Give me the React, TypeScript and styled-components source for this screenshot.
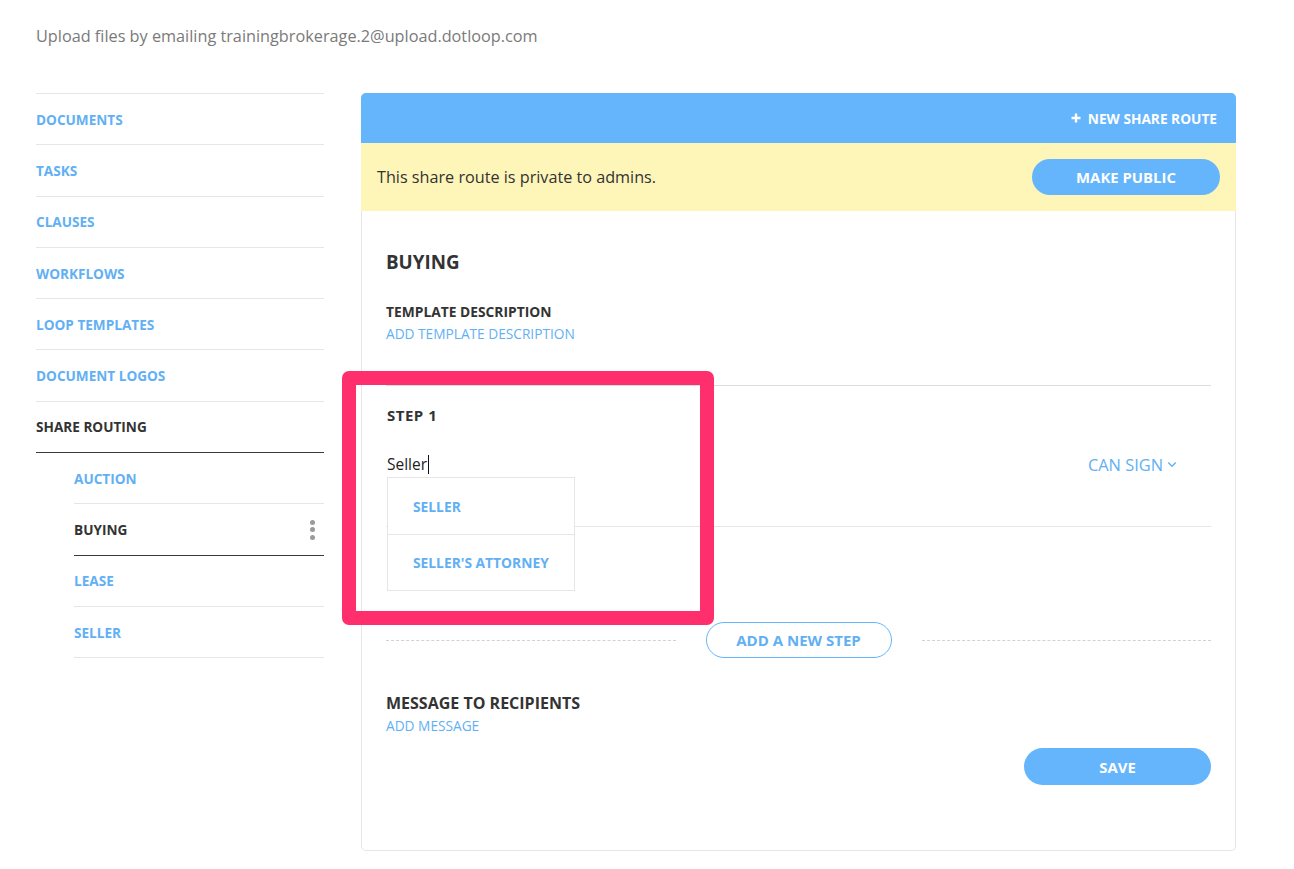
import * as React from "react";
import styled, { createGlobalStyle } from "styled-components";

const BLUE = "#64b5fc";
const LINK = "#62b0f4";
const DARK = "#333333";
const RULE = "#e6e6e6";

const GlobalStyle = createGlobalStyle`
    html, body {
        margin: 0;
        padding: 0;
        background: #ffffff;
        font-family: "Open Sans", "Liberation Sans", sans-serif;
    }
    * {
        box-sizing: border-box;
    }
`;

const navItems = [
    { label: "DOCUMENTS" },
    { label: "TASKS" },
    { label: "CLAUSES" },
    { label: "WORKFLOWS" },
    { label: "LOOP TEMPLATES" },
    { label: "DOCUMENT LOGOS" },
    { label: "SHARE ROUTING", active: true },
];

const routes = [
    { label: "AUCTION" },
    { label: "BUYING", active: true },
    { label: "LEASE" },
    { label: "SELLER" },
];

const suggestions = ["SELLER", "SELLER'S ATTORNEY"];

export default function App() {
    return (
        <>
            <GlobalStyle />
            <Page>
                <UploadNote>Upload files by emailing trainingbrokerage.2@upload.dotloop.com</UploadNote>
                <Columns>
                    <Sidebar>
                        {navItems.map((item) => (
                            <NavRow key={item.label} $active={item.active}>
                                {item.label}
                            </NavRow>
                        ))}
                        <SubList>
                            {routes.map((route) => (
                                <NavRow key={route.label} $active={route.active}>
                                    {route.label}
                                    {route.active && (
                                        <Kebab>
                                            <span />
                                            <span />
                                            <span />
                                        </Kebab>
                                    )}
                                </NavRow>
                            ))}
                        </SubList>
                    </Sidebar>

                    <Panel>
                        <PanelHeader>
                            <HeaderAction>
                                <svg width="10" height="10" viewBox="0 0 10 10">
                                    <path d="M5 0.5v9M0.5 5h9" stroke="#fff" strokeWidth="2.4" />
                                </svg>
                                NEW SHARE ROUTE
                            </HeaderAction>
                        </PanelHeader>
                        <Notice>
                            <NoticeText>This share route is private to admins.</NoticeText>
                            <SolidButton $width={188} $height={36}>MAKE PUBLIC</SolidButton>
                        </Notice>

                        <PanelBody>
                            <RouteTitle>BUYING</RouteTitle>
                            <FieldLabel>TEMPLATE DESCRIPTION</FieldLabel>
                            <AddLink>ADD TEMPLATE DESCRIPTION</AddLink>

                            <StepSection>
                                <StepTitle>STEP 1</StepTitle>
                                <RecipientRow>
                                    <RecipientInput>
                                        Seller<Caret />
                                    </RecipientInput>
                                    <Permission>
                                        CAN SIGN
                                        <svg width="10" height="7" viewBox="0 0 10 7">
                                            <path d="M1.2 1.5l3.8 3.8 3.8-3.8" fill="none" stroke={LINK} strokeWidth="1.3" />
                                        </svg>
                                    </Permission>
                                    <Suggestions>
                                        {suggestions.map((s) => (
                                            <Suggestion key={s}>{s}</Suggestion>
                                        ))}
                                    </Suggestions>
                                </RecipientRow>
                                <Highlight />
                            </StepSection>

                            <AddStepRow>
                                <DashedRule />
                                <OutlineButton>ADD A NEW STEP</OutlineButton>
                                <DashedRule />
                            </AddStepRow>

                            <MessageLabel>MESSAGE TO RECIPIENTS</MessageLabel>
                            <AddLink>ADD MESSAGE</AddLink>

                            <Actions>
                                <SolidButton $width={187} $height={37}>SAVE</SolidButton>
                            </Actions>
                        </PanelBody>
                    </Panel>
                </Columns>
            </Page>
        </>
    );
}

const Page = styled.div`
    padding: 25px 36px 20px 36px;
`;

const UploadNote = styled.div`
    font-size: 16.25px;
    line-height: 22px;
    color: #7a7a7a;
`;

const Columns = styled.div`
    display: flex;
    flex-direction: row;
    align-items: flex-start;
    gap: 37px;
    margin-top: 46px;
`;

const Sidebar = styled.nav`
    width: 288px;
    flex: none;
    border-top: 1px solid ${RULE};
`;

const SubList = styled.div`
    padding-left: 38px;
`;

const NavRow = styled.div<{ $active?: boolean }>`
    position: relative;
    height: 51.3px;
    display: flex;
    align-items: center;
    justify-content: space-between;
    font-size: 13.6px;
    font-weight: 700;
    color: ${(p) => (p.$active ? DARK : LINK)};
    border-bottom: 1px solid ${(p) => (p.$active ? "#3a3a3a" : RULE)};
`;

const Kebab = styled.div`
    display: flex;
    flex-direction: column;
    gap: 2.5px;
    margin-right: 9px;
    span {
        width: 5px;
        height: 5px;
        border-radius: 50%;
        background: #9a9a9a;
    }
`;

const Panel = styled.section`
    width: 875px;
    flex: none;
    border: 1px solid ${RULE};
    border-top: none;
    border-radius: 5px;
    background: #fff;
`;

const PanelHeader = styled.div`
    height: 50px;
    margin: 0 -1px;
    background: ${BLUE};
    border-radius: 5px 5px 0 0;
    display: flex;
    align-items: center;
    justify-content: flex-end;
    padding-right: 19px;
`;

const HeaderAction = styled.div`
    display: flex;
    align-items: center;
    gap: 7px;
    color: #fff;
    font-size: 13.7px;
    font-weight: 700;
`;

const Notice = styled.div`
    height: 68px;
    margin: 0 -1px;
    background: #fef5b9;
    display: flex;
    align-items: center;
    justify-content: space-between;
    padding: 0 16px;
`;

const NoticeText = styled.div`
    font-size: 16.2px;
    color: #333;
`;

const SolidButton = styled.button<{ $width: number; $height: number }>`
    width: ${(p) => p.$width}px;
    height: ${(p) => p.$height}px;
    border: none;
    border-radius: ${(p) => p.$height / 2}px;
    background: ${BLUE};
    color: #fff;
    font-family: inherit;
    font-size: 14.9px;
    font-weight: 700;
    padding: 0;
`;

const PanelBody = styled.div`
    padding: 39px 24px 65px 24px;
    display: flex;
    flex-direction: column;
`;

const RouteTitle = styled.h2`
    margin: 0;
    font-size: 18.8px;
    line-height: 24px;
    font-weight: 700;
    color: ${DARK};
`;

const FieldLabel = styled.div`
    margin-top: 29px;
    font-size: 13.8px;
    line-height: 18px;
    font-weight: 700;
    color: ${DARK};
`;

const AddLink = styled.div`
    margin-top: 4px;
    font-size: 13.7px;
    line-height: 18px;
    color: ${LINK};
`;

const StepSection = styled.div`
    position: relative;
    margin-top: 42px;
    border-top: 1px solid #dcdcdc;
    border-bottom: 1px solid ${RULE};
    padding: 19px 0 44px 1px;
`;

const StepTitle = styled.div`
    font-size: 15px;
    line-height: 20px;
    letter-spacing: 0.5px;
    font-weight: 700;
    color: ${DARK};
`;

const RecipientRow = styled.div`
    position: relative;
    margin-top: 21px;
    height: 36px;
    display: flex;
    align-items: center;
    justify-content: space-between;
    padding-right: 34px;
`;

const RecipientInput = styled.div`
    display: flex;
    align-items: center;
    font-size: 15.5px;
    color: #222;
`;

const Caret = styled.span`
    display: inline-block;
    width: 1px;
    height: 19px;
    margin-left: 1px;
    background: #111;
`;

const Permission = styled.div`
    display: flex;
    align-items: center;
    gap: 4px;
    font-size: 16.4px;
    color: ${LINK};
`;

const Suggestions = styled.div`
    position: absolute;
    top: 31px;
    left: 0;
    width: 188px;
    background: #fff;
    border: 1px solid ${RULE};
    z-index: 2;
`;

const Suggestion = styled.div`
    height: 56px;
    display: flex;
    align-items: center;
    padding-left: 25px;
    font-size: 13.8px;
    font-weight: 700;
    color: ${LINK};
    & + & {
        border-top: 1px solid ${RULE};
    }
`;

const Highlight = styled.div`
    position: absolute;
    top: -15px;
    left: -44px;
    width: 372px;
    height: 254px;
    border: 14px solid #ff2e6d;
    border-radius: 7px;
    z-index: 3;
    pointer-events: none;
`;

const AddStepRow = styled.div`
    margin-top: 95px;
    display: flex;
    align-items: center;
    gap: 30px;
`;

const DashedRule = styled.div`
    flex: 1;
    border-top: 1px dashed #d2d2d2;
`;

const OutlineButton = styled.button`
    width: 186px;
    height: 36px;
    flex: none;
    border: 1px solid ${BLUE};
    border-radius: 18px;
    background: #fff;
    color: ${LINK};
    font-family: inherit;
    font-size: 15px;
    font-weight: 700;
    padding: 0;
`;

const MessageLabel = styled.div`
    margin-top: 35px;
    font-size: 16px;
    line-height: 20px;
    font-weight: 700;
    color: ${DARK};
`;

const Actions = styled.div`
    margin-top: 13px;
    display: flex;
    justify-content: flex-end;
`;
